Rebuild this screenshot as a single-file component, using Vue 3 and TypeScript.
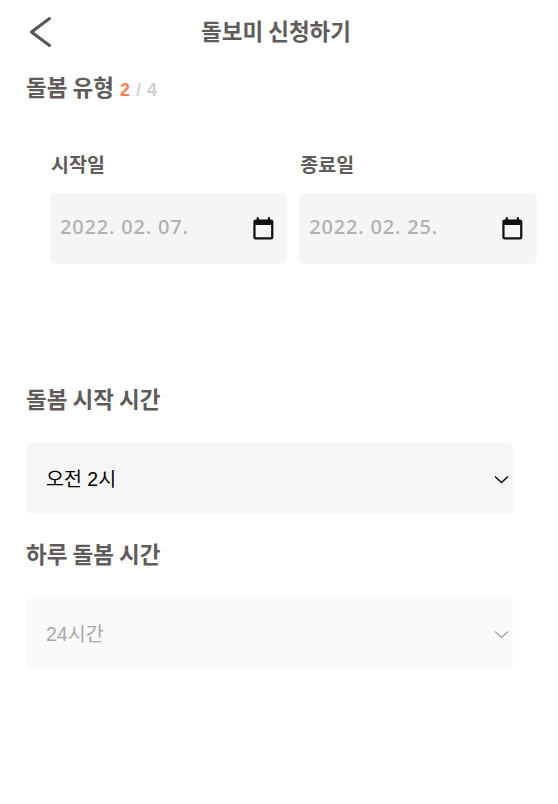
<script setup lang="ts">
const dates = [
  { label: '시작일', value: '2022. 02. 07.' },
  { label: '종료일', value: '2022. 02. 25.' },
]
</script>

<template>
  <div class="page">
    <header class="header">
      <svg class="back" width="26" height="32" viewBox="0 0 26 32" fill="none">
        <path d="M22.5 2.5 L4.5 16 L22.5 29.5" stroke="#5a5555" stroke-width="3" stroke-linecap="round" stroke-linejoin="round" />
      </svg>
      <h1 class="title">돌보미 신청하기</h1>
    </header>

    <div class="type-row">
      <span class="section">돌봄 유형</span>
      <span class="step"><b class="current">2</b><b class="slash"> / </b><b class="total">4</b></span>
    </div>

    <div class="dates">
      <div v-for="d in dates" :key="d.label" class="date-col">
        <div class="date-label">{{ d.label }}</div>
        <div class="date-field">
          <span class="date-value">{{ d.value }}</span>
          <svg class="cal" width="26.700" height="26.700" viewBox="0 0 24 24">
            <path fill="#111" d="M19 4h-1V2h-2v2H8V2H6v2H5a2 2 0 0 0-2 2v14a2 2 0 0 0 2 2h14a2 2 0 0 0 2-2V6a2 2 0 0 0-2-2zm0 16H5V9h14v11z" />
          </svg>
        </div>
      </div>
    </div>

    <div class="section start-label">돌봄 시작 시간</div>
    <div class="select">
      <span>오전 2시</span>
      <svg width="15" height="10" viewBox="0 0 15 10" fill="none"><path d="M1 2.500l6.500 6L14 2.500" stroke="#111" stroke-width="1.600" /></svg>
    </div>

    <div class="section day-label">하루 돌봄 시간</div>
    <div class="select disabled">
      <span>24시간</span>
      <svg width="15" height="10" viewBox="0 0 15 10" fill="none"><path d="M1 2.500l6.500 6L14 2.500" stroke="#aaa" stroke-width="1.600" /></svg>
    </div>
  </div>
</template>

<style>
html, body { margin: 0; background: #fff; }
</style>

<style scoped>
.page {
  width: 558px;
  height: 804px;
  overflow: hidden;
  box-sizing: border-box;
  font-family: "Noto Sans CJK KR", "Noto Sans", sans-serif;
  background: #fff;
}
.header {
  height: 64px;
  position: relative;
  display: flex;
  align-items: center;
  justify-content: center;
  padding-right: 6px;
  box-sizing: border-box;
}
.back { position: absolute; left: 27px; top: 16px; }
.title {
  margin: -4px 0 0;
  font-size: 22.500px;
  line-height: 60px;
  font-weight: 700;
  color: #5f5b5b;
}
.section {
  font-size: 22.500px;
  font-weight: 700;
  line-height: 32px;
  color: #5f5b5b;
}
.type-row {
  margin-left: 26px;
  height: 32px;
  margin-top: 6px;
  display: flex;
  align-items: center;
  gap: 6px;
}
.step {
  font-size: 18px;
  font-family: "Liberation Sans", sans-serif;
  font-weight: 700;
  letter-spacing: 0.5px;
  white-space: pre;
  margin-top: 8px;
}
.current { color: #ff7f50; }
.slash { color: #d5d5d5; }
.total { color: #cfcfcf; }
.dates {
  display: flex;
  gap: 12px;
  margin: 47px 0 0 50px;
}
.date-col { width: 237.300px; }
.date-label {
  font-size: 19.500px;
  font-weight: 700;
  line-height: 30px;
  color: #5f5b5b;
  margin-left: 1px;
  margin-bottom: 14px;
}
.date-field {
  height: 71px;
  border-radius: 6px;
  background: #f5f5f5;
  display: flex;
  align-items: center;
  justify-content: space-between;
  padding: 0 11px 0 10px;
}
.date-value {
  font-family: "Noto Sans", sans-serif;
  font-size: 20px;
  font-weight: 500;
  letter-spacing: 0.8px;
  color: #b0b0b0;
  margin-top: -5px;
}
.cal { margin-top: -1px; }
.start-label { margin: 118px 0 0 26px; }
.select {
  width: 487px;
  height: 71px;
  margin: 29px 0 0 26px;
  box-sizing: border-box;
  padding: 0 4px 0 20px;
  border-radius: 6px;
  background: #f6f6f6;
  display: flex;
  align-items: center;
  justify-content: space-between;
  font-family: "Liberation Sans", "Noto Sans CJK KR", sans-serif;
  font-size: 19.500px;
  color: #000;
}
.select span { margin-top: -3px; }
.day-label { margin: 23px 0 0 26px; }
.disabled { background: #fafafa; color: #a8a8a8; }
</style>
